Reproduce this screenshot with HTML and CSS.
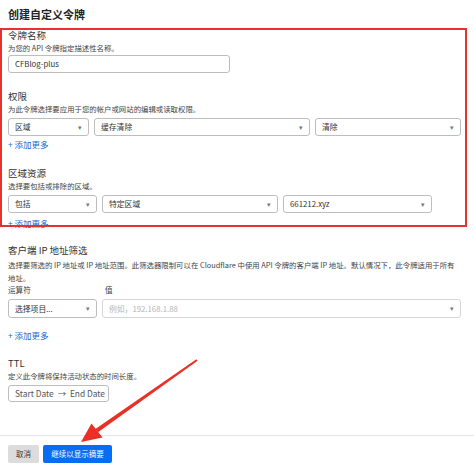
FILE: index.html
```html
<!DOCTYPE html>
<html lang="zh-CN">

<head>
    <meta charset="UTF-8">
    <meta name="viewport" content="width=device-width, initial-scale=1.0">
    <title>创建自定义令牌</title>
    <link rel="stylesheet" href="styles.css">
</head>

<body>
    <div class="page">
        <h1>创建自定义令牌</h1>

        <div class="section first">
            <div class="label">令牌名称</div>
            <div class="desc">为您的 API 令牌指定描述性名称。</div>
            <div class="field name-field">CFBlog-plus</div>
        </div>

        <div class="section">
            <div class="label">权限</div>
            <div class="desc">为此令牌选择要应用于您的帐户或网站的编辑或读取权限。</div>
            <div class="row">
                <div class="field select w-perm1">区域<span class="caret">▾</span></div>
                <div class="field select w-perm2">缓存清除<span class="caret">▾</span></div>
                <div class="field select w-perm3">清除<span class="caret">▾</span></div>
            </div>
            <div class="add">+ 添加更多</div>
        </div>

        <div class="section">
            <div class="label">区域资源</div>
            <div class="desc">选择要包括或排除的区域。</div>
            <div class="row">
                <div class="field select w-zone1">包括<span class="caret">▾</span></div>
                <div class="field select w-zone2">特定区域<span class="caret">▾</span></div>
                <div class="field select w-zone3">661212.xyz<span class="caret">▾</span></div>
            </div>
            <div class="add tight">+ 添加更多</div>
        </div>

        <div class="section ip">
            <div class="label">客户端 IP 地址筛选</div>
            <div class="desc wrap">选择要筛选的 IP 地址或 IP 地址范围。此筛选器限制可以在 Cloudflare 中使用 API 令牌的客户端 IP 地址。默认情况下，此令牌适用于所有地址。</div>
            <div class="row heads">
                <div class="head w-op">运算符</div>
                <div class="head">值</div>
            </div>
            <div class="row">
                <div class="field select tall w-op">选择项目...<span class="caret">▾</span></div>
                <div class="field select tall light w-val"><span class="ph">例如，192.168.1.88</span><span class="caret">▾</span></div>
            </div>
            <div class="add spaced">+ 添加更多</div>
        </div>

        <div class="section ttl">
            <div class="label">TTL</div>
            <div class="desc">定义此令牌将保持活动状态的时间长度。</div>
            <div class="field dates">Start Date <span class="arrow">→</span> End Date</div>
        </div>

        <div class="footer">
            <button class="btn cancel">取消</button>
            <button class="btn primary">继续以显示摘要</button>
        </div>
    </div>

    <!-- 标注框和箭头 -->
    <div class="mark-box"></div>
    <svg class="mark-arrow" width="474" height="465" viewBox="0 0 474 465">
        <polygon points="197.6,360.7 196.4,359.3 95.4,428.9 98,432.3" fill="#ea2f26" />
        <polygon points="81,442 91.5,423.5 102.5,437.5" fill="#ea2f26" />
    </svg>
</body>

</html>
```

FILE: styles.css
```css
body {
    margin: 0;
    background-color: #fff;
    font-family: "Noto Sans CJK SC", "Noto Sans", sans-serif;
    color: #333;
}

.page {
    padding: 0 12px 0 8px;
}

h1 {
    margin: 4px 0 0;
    font-size: 11px;
    line-height: 20px;
    font-weight: bold;
    color: #222;
}

.section {
    margin-top: 16px;
}

.section.first {
    margin-top: 4px;
}

.section.ip {
    margin-top: 14px;
}

.section.ttl {
    margin-top: 15px;
}

.label {
    font-size: 9.5px;
    line-height: 14px;
    color: #333;
}

.desc {
    font-size: 7.4px;
    line-height: 12px;
    color: #444;
}

.desc.wrap {
    line-height: 13px;
    margin-top: 1px;
    padding-right: 4px;
}

.row {
    display: flex;
    gap: 5px;
    margin-top: 3px;
}

.row.heads {
    margin-top: 0;
}

.head {
    font-size: 7.6px;
    line-height: 12px;
    color: #444;
}

.field {
    box-sizing: border-box;
    height: 18px;
    border: 1px solid #bdbdbd;
    border-radius: 3px;
    padding: 0 6px;
    font-size: 7.8px;
    line-height: 16px;
    color: #333;
    background-color: #fff;
    white-space: nowrap;
    overflow: hidden;
}

.name-field {
    width: 222px;
    margin-top: 1px;
}

.select {
    display: flex;
    justify-content: space-between;
}

.caret {
    font-size: 7px;
    color: #777;
}

.tall {
    height: 19px;
    line-height: 17px;
}

.light {
    border-color: #d6d6d6;
}

.ph {
    color: #b5b5b5;
}

.w-perm1 { width: 81px; }
.w-perm2 { width: 216px; }
.w-perm3 { width: 146px; }
.w-zone1 { width: 89px; }
.w-zone2 { width: 176px; }
.w-zone3 { width: 149px; }
.w-op { width: 89px; }
.w-val { width: 359px; }

.head.w-op {
    width: 92px;
}

.add {
    margin-top: 2px;
    font-size: 8.5px;
    line-height: 12px;
    color: #1769d1;
}

.add.tight {
    margin-top: 4px;
}

.add.spaced {
    margin-top: 11px;
}

.dates {
    width: 101px;
    height: 17px;
    margin-top: 3px;
    padding: 0 6px;
    font-size: 8.4px;
    color: #555;
    line-height: 15px;
}

.arrow {
    margin: 0 2px;
}

.footer {
    margin: 33px -12px 0 -8px;
    padding: 9px 8px 0;
    border-top: 1px solid #e6e6e6;
    display: flex;
    gap: 4px;
}

.btn {
    height: 18px;
    border: none;
    border-radius: 2px;
    padding: 0 7px;
    font-family: "Noto Sans CJK SC", sans-serif;
    font-size: 7.5px;
    line-height: 18px;
    white-space: nowrap;
}

.cancel {
    width: 31px;
    background-color: #dcdcdc;
    color: #333;
}

.primary {
    width: 69px;
    background-color: #0a6cf0;
    color: #fff;
}

.mark-box {
    position: absolute;
    left: 0;
    top: 28px;
    width: 467px;
    height: 199px;
    box-sizing: border-box;
    border: 2px solid #e5322c;
}

.mark-arrow {
    position: absolute;
    left: 0;
    top: 0;
    pointer-events: none;
}
```
